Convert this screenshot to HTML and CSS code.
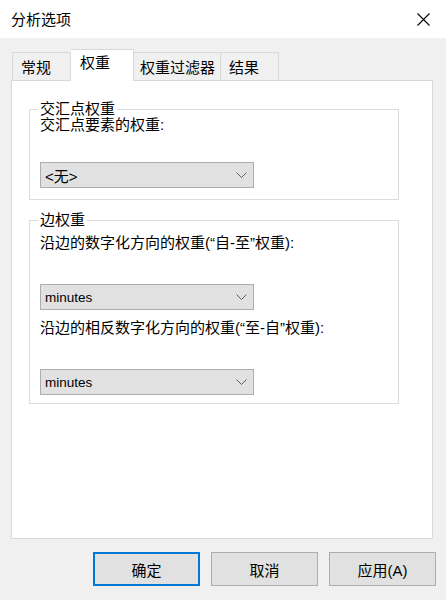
FILE: index.html
```html
<!DOCTYPE html>
<html lang="zh-CN">

<head>
    <meta charset="UTF-8">
    <title>分析选项</title>
    <link rel="stylesheet" href="styles.css">
</head>

<body>
    <div class="titlebar">
        <span class="title">分析选项</span>
        <svg class="close" width="13" height="13" viewBox="0 0 13 13">
            <path d="M0.5 0.5 L12.5 12.5 M12.5 0.5 L0.5 12.5" stroke="#000" stroke-width="1.1" fill="none" />
        </svg>
    </div>

    <div class="content">
        <div class="tabs">
            <div class="tab tab-general">常规</div>
            <div class="tab tab-weights active">权重</div>
            <div class="tab tab-filters">权重过滤器</div>
            <div class="tab tab-results">结果</div>
        </div>

        <div class="panel">
            <fieldset class="group group-junction">
                <legend>交汇点权重</legend>
                <div class="label">交汇点要素的权重:</div>
                <div class="combo">
                    <span>&lt;无&gt;</span>
                    <svg width="11" height="6" viewBox="0 0 11 6">
                        <polyline points="0.5,0.5 5.5,5.5 10.5,0.5" stroke="#5f5f5f" fill="none" />
                    </svg>
                </div>
            </fieldset>

            <fieldset class="group group-edge">
                <legend>边权重</legend>
                <div class="label label-first">沿边的数字化方向的权重(“自-至”权重):</div>
                <div class="combo">
                    <span class="latin">minutes</span>
                    <svg width="11" height="6" viewBox="0 0 11 6">
                        <polyline points="0.5,0.5 5.5,5.5 10.5,0.5" stroke="#5f5f5f" fill="none" />
                    </svg>
                </div>
                <div class="label label-next">沿边的相反数字化方向的权重(“至-自”权重):</div>
                <div class="combo">
                    <span class="latin">minutes</span>
                    <svg width="11" height="6" viewBox="0 0 11 6">
                        <polyline points="0.5,0.5 5.5,5.5 10.5,0.5" stroke="#5f5f5f" fill="none" />
                    </svg>
                </div>
            </fieldset>
        </div>

        <div class="buttons">
            <button class="btn default">确定</button>
            <button class="btn">取消</button>
            <button class="btn">应用(A)</button>
        </div>
    </div>
</body>

</html>
```

FILE: styles.css
```css
body {
    margin: 0;
    background: #f0f0f0;
    font-family: 'Liberation Sans', 'Noto Sans CJK SC', sans-serif;
    font-size: 15px;
    color: #000;
}

.titlebar {
    height: 38px;
    background: #fff;
    display: flex;
    align-items: center;
    justify-content: space-between;
    padding: 1px 16px 0 11px;
    box-sizing: border-box;
}

.title {
    line-height: 16px;
}

.tabs {
    display: flex;
    align-items: flex-end;
    margin: 11px 0 0 12px;
    height: 31px;
}

.tab {
    box-sizing: border-box;
    height: 28px;
    border: 1px solid #d9d9d9;
    border-bottom: none;
    background: #f0f0f0;
    line-height: 16px;
    padding-top: 7px;
    white-space: nowrap;
}

.tab + .tab {
    border-left: none;
}

.tab-general {
    width: 59px;
    padding-left: 8px;
}

.tab-weights {
    width: 63px;
    padding-left: 9px;
}

.tab-filters {
    width: 87px;
    padding-left: 6px;
}

.tab-results {
    width: 58px;
    padding-left: 8px;
}

.tab.active {
    height: 32px;
    margin-bottom: -1px;
    background: #fff;
    padding-top: 5px;
    position: relative;
    z-index: 1;
}

.panel {
    box-sizing: border-box;
    width: 422px;
    height: 459px;
    margin-left: 11px;
    background: #fff;
    border: 1px solid #d9d9d9;
    padding: 20px 0 0 17px;
}

.group {
    box-sizing: border-box;
    width: 370px;
    margin: 0;
    border: 1px solid #dcdcdc;
    padding: 0 10px 11px;
}

.group legend {
    padding: 0 2px;
    margin-left: -2px;
    line-height: 16px;
}

.group-edge {
    margin-top: 12px;
    padding-bottom: 8px;
}

.label {
    line-height: 16px;
    white-space: nowrap;
}

.label-first {
    margin-top: 7px;
}

.label-next {
    margin-top: 10px;
}

.combo {
    box-sizing: border-box;
    width: 214px;
    height: 26px;
    margin-top: 29px;
    background: #e1e1e1;
    border: 1px solid #adadad;
    display: flex;
    align-items: center;
    justify-content: space-between;
    padding: 0 6px 0 4px;
}

.group-edge .combo {
    margin-top: 33px;
}

.combo .latin {
    font-size: 13.5px;
}

.buttons {
    display: flex;
    justify-content: flex-end;
    gap: 11px;
    margin-top: 13px;
    padding-right: 10px;
}

.btn {
    box-sizing: border-box;
    width: 107px;
    height: 34px;
    background: #e1e1e1;
    border: 1px solid #adadad;
    font-family: 'Liberation Sans', 'Noto Sans CJK SC', sans-serif;
    font-size: 15px;
    color: #000;
    padding: 0;
}

.btn.default {
    border: 2px solid #0078d7;
}
```
